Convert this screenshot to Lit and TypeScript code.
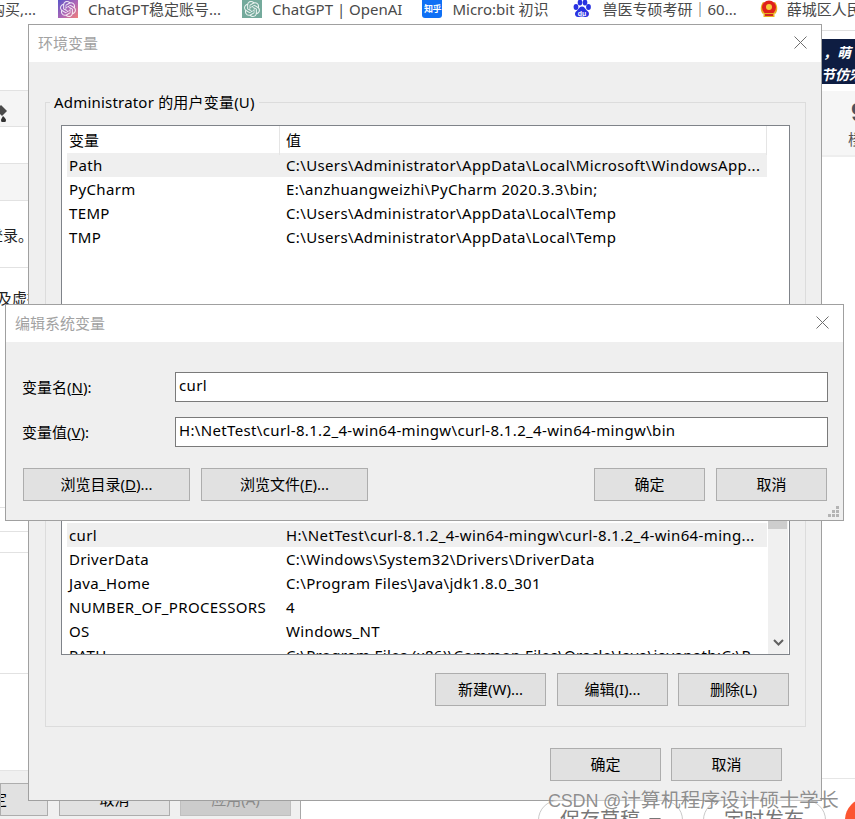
import { LitElement, html, css } from "lit";
import { customElement } from "lit/decorators.js";

const OPENAI =
  "M22.2819 9.8211a5.9847 5.9847 0 0 0-.5157-4.9108 6.0462 6.0462 0 0 0-6.5098-2.9A6.0651 6.0651 0 0 0 4.9807 4.1818a5.9847 5.9847 0 0 0-3.9977 2.9 6.0462 6.0462 0 0 0 .7427 7.0966 5.98 5.98 0 0 0 .511 4.9107 6.051 6.051 0 0 0 6.5146 2.9001A5.9847 5.9847 0 0 0 13.2599 24a6.0557 6.0557 0 0 0 5.7718-4.2058 5.9894 5.9894 0 0 0 3.9977-2.9001 6.0557 6.0557 0 0 0-.7475-7.0729zm-9.022 12.6081a4.4755 4.4755 0 0 1-2.8764-1.0408l.1419-.0804 4.7783-2.7582a.7948.7948 0 0 0 .3927-.6813v-6.7369l2.02 1.1686a.071.071 0 0 1 .038.052v5.5826a4.504 4.504 0 0 1-4.4945 4.4944zm-9.6607-4.1254a4.4708 4.4708 0 0 1-.5346-3.0137l.142.0852 4.783 2.7582a.7712.7712 0 0 0 .7806 0l5.8428-3.3685v2.3324a.0804.0804 0 0 1-.0332.0615L9.74 19.9502a4.4992 4.4992 0 0 1-6.1408-1.6464zM2.3408 7.8956a4.485 4.485 0 0 1 2.3655-1.9728V11.6a.7664.7664 0 0 0 .3879.6765l5.8144 3.3543-2.0201 1.1685a.0757.0757 0 0 1-.071 0l-4.8303-2.7865A4.504 4.504 0 0 1 2.3408 7.872zm16.5963 3.8558L13.1038 8.364 15.1192 7.2a.0757.0757 0 0 1 .071 0l4.8303 2.7913a4.4944 4.4944 0 0 1-.6765 8.1042v-5.6772a.79.79 0 0 0-.407-.667zm2.0107-3.0231l-.142-.0852-4.7735-2.7818a.7759.7759 0 0 0-.7854 0L9.409 9.2297V6.8974a.0662.0662 0 0 1 .0284-.0615l4.8303-2.7866a4.4992 4.4992 0 0 1 6.6802 4.66zM8.3065 12.863l-2.02-1.1638a.0804.0804 0 0 1-.038-.0567V6.0742a4.4992 4.4992 0 0 1 7.3757-3.4537l-.142.0805L8.704 5.459a.7948.7948 0 0 0-.3927.6813zm1.0976-2.3654l2.602-1.4998 2.6069 1.4998v2.9994l-2.5974 1.4997-2.6067-1.4997Z";

const upperRows = [
  ["Path", "C:\\Users\\Administrator\\AppData\\Local\\Microsoft\\WindowsApp..."],
  ["PyCharm", "E:\\anzhuangweizhi\\PyCharm 2020.3.3\\bin;"],
  ["TEMP", "C:\\Users\\Administrator\\AppData\\Local\\Temp"],
  ["TMP", "C:\\Users\\Administrator\\AppData\\Local\\Temp"],
];
const lowerRows = [
  ["ComSpec", "C:\\Windows\\system32\\cmd.exe"],
  ["curl", "H:\\NetTest\\curl-8.1.2_4-win64-mingw\\curl-8.1.2_4-win64-ming..."],
  ["DriverData", "C:\\Windows\\System32\\Drivers\\DriverData"],
  ["Java_Home", "C:\\Program Files\\Java\\jdk1.8.0_301"],
  ["NUMBER_OF_PROCESSORS", "4"],
  ["OS", "Windows_NT"],
  ["PATH", "C:\\Program Files (x86)\\Common Files\\Oracle\\Java\\javapath;C:\\P..."],
];

@customElement("app-root")
export class AppRoot extends LitElement {
  static styles = css`
    :host {
      display: block;
      position: relative;
      width: 855px;
      height: 819px;
      overflow: hidden;
      background: #fff;
      font-family: "Noto Sans", "Noto Sans CJK SC", sans-serif;
      font-size: 15px;
      color: #000;
    }
    * { box-sizing: border-box; }

    /* bookmarks */
    .bar {
      display: flex;
      align-items: flex-start;
      height: 24px;
      overflow: hidden;
      color: #4a4a4a;
      font-size: 15px;
      line-height: 18px;
      white-space: nowrap;
    }
    .bm { display: flex; align-items: flex-start; flex: none; }
    .bm .t { margin-left: 10px; }
    .ico { display: block; width: 20px; height: 18px; flex: none; }
    .gpt1 { background: linear-gradient(135deg, #5a55c8, #b067b5 55%, #f2817a); }
    .gpt2 { background: #74aa9c; }
    .ico.gpt1, .ico.gpt2 { padding: 1px 2px; }
    .zh {
      background: #0f70f5;
      border-radius: 0 0 3px 3px;
      color: #fff;
      font-size: 9px;
      line-height: 17px;
      text-align: center;
      font-weight: 700;
      letter-spacing: -0.5px;
    }

    /* page behind the windows */
    .back-left {
      position: absolute;
      left: 0;
      top: 30px;
      width: 28px;
      height: 740px;
      display: flex;
      flex-direction: column;
      overflow: hidden;
      font-size: 15px;
      color: #222;
      white-space: nowrap;
    }
    .s { flex: none; border-bottom: 1px solid #e2e2e2; position: relative; }
    .gray { background: #f5f5f5; }
    .back-left svg { position: absolute; left: -4px; top: 13px; }
    .align-end { display: flex; justify-content: flex-end; align-items: center; padding-right: 1px; }
    .tail { margin-right: -6px; }
    .back-right {
      position: absolute;
      left: 822px;
      top: 30px;
      width: 33px;
      height: 749px;
      display: flex;
      flex-direction: column;
      overflow: hidden;
      white-space: nowrap;
    }
    .rline { height: 9px; flex: none; border-top: 1px solid #e0e0e0; }
    .banner {
      height: 45px;
      flex: none;
      background: #0e1d42;
      color: #fff;
      font-style: italic;
      font-weight: 700;
      font-size: 14px;
      line-height: 22px;
      padding: 3px 0 0 1px;
      overflow: hidden;
    }
    .banner div + div { margin-left: -2px; }
    .rcard {
      margin-top: 7px;
      height: 66px;
      flex: none;
      background: #f6f6f6;
      border-bottom: 2px solid #eee;
      overflow: hidden;
      padding-left: 26px;
      color: #555;
    }
    .rnum { font: 700 26px/24px "Liberation Sans", sans-serif; color: #4c5160; margin: 9px 0 0 3px; }
    .rlbl { margin-top: 5px; font-size: 15px; line-height: 20px; }
    .rspacer { flex: 1; border-bottom: 1px solid #e6e6e6; }

    .footer-left {
      position: absolute;
      left: 0;
      top: 770px;
      width: 301px;
      height: 49px;
      background: #f0f0f0;
      border-top: 1px solid #e4e4e4;
      border-right: 1px solid #a8a8a8;
      display: flex;
      align-items: flex-start;
      gap: 10px;
      padding: 12px 0 0 0;
    }
    .fbtn {
      flex: none;
      width: 111px;
      height: 33px;
      background: #e1e1e1;
      border: 1px solid #adadad;
      font-size: 15px;
      line-height: 30px;
      text-align: center;
    }
    .fbtn.first { width: 48px; text-align: right; padding-right: 40px; margin-right: 1px; overflow: hidden; white-space: nowrap; direction: rtl; }
    .fbtn.dis { background: #cccccc; border-color: #bfbfbf; color: #8a8a8a; }

    /* windows */
    .win {
      position: absolute;
      display: flex;
      flex-direction: column;
      border: 1px solid #a0a0a0;
      background: #efefef;
    }
    .w-env { left: 28px; top: 24px; width: 794px; height: 777px; }
    .w-edit { left: 5px; top: 304px; width: 839px; height: 217px; }
    .title {
      flex: none;
      height: 37px;
      background: #fff;
      display: flex;
      align-items: center;
      justify-content: space-between;
      color: #a2a2a2;
      padding: 0 14px 2px 9px;
    }
    .x { display: block; width: 13px; height: 13px; }

    .env-body { flex: 1; display: flex; flex-direction: column; padding: 30px 15px 19px 16px; min-height: 0; }
    fieldset {
      flex: 1;
      margin: 0;
      min-width: 0;
      min-height: 0;
      border: 1px solid #dcdcdc;
      padding: 13px 15px 20px 15px;
      display: flex;
      flex-direction: column;
    }
    legend {
      margin-left: -11px;
      padding: 0 4px;
      line-height: 20px;
      font-size: 15px;
      letter-spacing: 0.2px;
    }
    .list {
      flex: 1;
      min-height: 0;
      background: #fff;
      border: 1px solid #7f8389;
      display: flex;
      flex-direction: column;
      justify-content: space-between;
      overflow: hidden;
      white-space: nowrap;
    }
    .head {
      display: grid;
      grid-template-columns: 213px 487px;
      margin-left: 5px;
      height: 27px;
      line-height: 29px;
      flex: none;
    }
    .head div { padding-left: 2px; border-right: 1px solid #e5e5e5; }
    .head div + div { padding-left: 6px; }
    .row {
      display: grid;
      grid-template-columns: 212px 488px;
      height: 24px;
      line-height: 24px;
      flex: none;
      letter-spacing: 0.36px;
    }
    .row div { padding-left: 2px; overflow: hidden; }
    .row div + div { padding-left: 7px; }
    .row.sel { background: #efefef; }
    .rows { margin-left: 5px; width: 700px; }
    .lower {
      flex: none;
      height: 155px;
      display: flex;
      overflow: hidden;
    }
    .lower .rows { flex: none; }
    .sb {
      flex: none;
      width: 20px;
      margin-left: 1px;
      background: #f0f0f0;
      position: relative;
      display: flex;
      flex-direction: column;
      align-items: center;
      justify-content: flex-end;
      padding-bottom: 8px;
    }
    .thumb { position: absolute; left: 0; right: 1px; top: 0; height: 30px; background: #cdcdcd; }
    .actions { flex: none; display: flex; justify-content: flex-end; gap: 10px; margin-top: 18px; padding-right: 1px; }
    .mr { margin-right: 1px; }
    .btn {
      flex: none;
      width: 111px;
      height: 33px;
      background: #e1e1e1;
      border: 1px solid #adadad;
      font-family: inherit;
      font-size: 15px;
      line-height: 24px;
      text-align: center;
      padding: 0 0 1px;
      color: #000;
    }
    .btn.wide { width: 167px; }
    .env-foot { flex: none; display: flex; justify-content: flex-end; gap: 10px; margin-top: 21px; padding-right: 24px; }

    .edit-body { flex: 1; position: relative; padding: 30px 15px 0 16px; display: flex; flex-direction: column; }
    .form { display: grid; grid-template-columns: 153px 1fr; row-gap: 15px; align-items: center; }
    .inp {
      height: 30px;
      background: #fff;
      border: 1px solid #7a7a7a;
      padding-left: 3px;
      line-height: 25px;
      white-space: nowrap;
      letter-spacing: 0.35px;
    }
    .lbl { line-height: 24px; }
    .edit-acts { display: flex; margin: 21px 1px 0 1px; gap: 11px; }
    .grow { flex: 1; }
    .grip { position: absolute; right: 3px; bottom: 2px; display: block; }

    /* foreground bits of the page */
    .pills {
      position: absolute;
      left: 538px;
      top: 800px;
      display: flex;
      gap: 20px;
      color: #777;
      font-size: 20px;
      line-height: 24px;
      z-index: 1;
    }
    .pill {
      height: 40px;
      border: 1px solid #c9c9c9;
      border-radius: 20px;
      flex: none;
      padding-top: 7px;
      white-space: nowrap;
      display: flex;
      gap: 9px;
    }
    .p1 { width: 145px; padding-left: 21px; }
    .p2 { width: 123px; padding-left: 20px; }
    .tri { width: 0; height: 0; border: 6px solid transparent; border-top: 7px solid #777; margin-top: 10px; }
    .dot { position: absolute; left: 845px; top: 798px; width: 44px; height: 44px; border-radius: 50%; background: #fc5531; }
    .wm {
      position: absolute;
      left: 548px;
      top: 786px;
      font-size: 19.8px;
      line-height: 28px;
      color: rgba(118, 118, 118, 0.82);
      text-shadow: 0 0 1px rgba(255,255,255,.6);
      white-space: nowrap;
      z-index: 2;
    }
    .wm .c { font-family: "Liberation Sans", sans-serif; font-size: 18px; letter-spacing: -0.2px; }
    u { text-underline-offset: 1px; }
  `;

  private knot(bg: string) {
    return html`<span class="ico ${bg}"><svg width="16" height="16" viewBox="0 0 24 24"><path fill="#fff" fill-opacity=".85" d=${OPENAI}></path></svg></span>`;
  }

  private xIcon() {
    return html`<svg class="x" viewBox="0 0 13 13"><path d="M.5.5l12 12M12.5.5l-12 12" stroke="#6e6e6e" stroke-width="1" fill="none"></path></svg>`;
  }

  private rows(rows: string[][], selected: number) {
    return rows.map(
      (r, i) => html`<div class="row ${i === selected ? "sel" : ""}"><div>${r[0]}</div><div>${r[1]}</div></div>`
    );
  }

  render() {
    return html`
      <div class="bar">
        <div class="bm" style="margin-left:-10px"><span>购买,...</span></div>
        <div class="bm" style="margin-left:22px">${this.knot("gpt1")}<span class="t">ChatGPT稳定账号...</span></div>
        <div class="bm" style="margin-left:21px">${this.knot("gpt2")}<span class="t">ChatGPT | OpenAI</span></div>
        <div class="bm" style="margin-left:20px"><span class="ico zh">知乎</span><span class="t">Micro:bit 初识</span></div>
        <div class="bm" style="margin-left:24px">
          <svg class="ico" viewBox="0 0 20 18">
            <ellipse cx="4" cy="7" rx="2.4" ry="3" fill="#2932e1"></ellipse>
            <ellipse cx="8" cy="2.5" rx="2.3" ry="3" fill="#2932e1"></ellipse>
            <ellipse cx="13" cy="2.5" rx="2.3" ry="3" fill="#2932e1"></ellipse>
            <ellipse cx="16.5" cy="7" rx="2.4" ry="3" fill="#2932e1"></ellipse>
            <path d="M10 6.5c3 0 3.5 3.5 6 5 2 2 .8 5.5-2 5.5-1.500 0-2.500-.6-4-.6s-2.500.6-4 .6c-2.800 0-4-3.500-2-5.500 2.500-1.500 3-5 6-5z" fill="#2932e1"></path>
            <text x="10" y="15.500" font-size="7" font-weight="700" fill="#fff" text-anchor="middle" font-family="Liberation Sans">du</text>
          </svg>
          <span class="t">兽医专硕考研｜60...</span>
        </div>
        <div class="bm" style="margin-left:22px">
          <svg class="ico" viewBox="0 0 20 18">
            <path d="M4 14c-3-3-3-8 0-12l2 1c-2 3-2 6 0 9zM16 14c3-3 3-8 0-12l-2 1c2 3 2 6 0 9z" fill="#e8b020"></path>
            <circle cx="10" cy="7.500" r="7" fill="#e0201b"></circle>
            <circle cx="10" cy="7" r="3" fill="#f4cb3a"></circle>
            <rect x="4.500" y="13" width="11" height="4" fill="#e8b020"></rect>
            <rect x="6" y="14" width="8" height="2" fill="#d0281f"></rect>
          </svg>
          <span class="t" style="margin-left:8px">薛城区人民政府</span>
        </div>
      </div>

      <div class="back-left">
        <div class="s" style="height:61px"></div>
        <div class="s gray" style="height:36px">
          <svg width="14" height="18" viewBox="0 0 14 18"><path d="M5 1l6 6-5 5-6-6z" fill="#4a4a4a"></path><path d="M7 12c2 2 3 3 3 4a2.500 2.500 0 0 1-5 0c0-1 1-2 2-4z" fill="#333"></path></svg>
        </div>
        <div class="s" style="height:37px"></div>
        <div class="s gray" style="height:37px"></div>
        <div class="s align-end" style="height:67px"><span class="tail">登录。</span></div>
        <div class="s" style="height:240px; padding-top:19px"><span style="margin-left:-3px">及虚拟</span></div>
        <div class="s" style="height:24px"></div>
        <div class="s" style="height:21px"></div>
        <div class="s" style="height:121px"></div>
      </div>

      <div class="back-right">
        <div class="rline"></div>
        <div class="banner"><div>，萌</div><div>节仿宋</div></div>
        <div class="rcard"><div class="rnum">9</div><div class="rlbl">楼</div></div>
        <div class="rspacer"></div>
      </div>

      <div class="footer-left">
        <div class="fbtn first">定</div>
        <div class="fbtn">取消</div>
        <div class="fbtn dis">应用(A)</div>
      </div>

      <div class="pills">
        <div class="pill p1"><span>保存草稿</span><span class="tri"></span></div>
        <div class="pill p2"><span>定时发布</span></div>
      </div>
      <div class="dot"></div>

      <div class="win w-env">
        <div class="title"><span>环境变量</span>${this.xIcon()}</div>
        <div class="env-body">
          <fieldset>
            <legend>Administrator 的用户变量(U)</legend>
            <div class="list">
              <div>
                <div class="head"><div>变量</div><div>值</div></div>
                <div class="rows">${this.rows(upperRows, 0)}</div>
              </div>
              <div class="lower">
                <div class="rows">${this.rows(lowerRows, 1)}</div>
                <div class="sb">
                  <div class="thumb"></div>
                  <svg width="11" height="7" viewBox="0 0 11 7"><path d="M1 1l4.500 4.500L10 1" stroke="#606060" stroke-width="2" fill="none"></path></svg>
                </div>
              </div>
            </div>
            <div class="actions">
              <button class="btn mr">新建(W)...</button>
              <button class="btn">编辑(I)...</button>
              <button class="btn">删除(L)</button>
            </div>
          </fieldset>
          <div class="env-foot">
            <button class="btn">确定</button>
            <button class="btn">取消</button>
          </div>
        </div>
      </div>

      <div class="win w-edit">
        <div class="title"><span>编辑系统变量</span>${this.xIcon()}</div>
        <div class="edit-body">
          <div class="form">
            <div class="lbl">变量名(<u>N</u>):</div>
            <div class="inp">curl</div>
            <div class="lbl">变量值(<u>V</u>):</div>
            <div class="inp">H:\\NetTest\\curl-8.1.2_4-win64-mingw\\curl-8.1.2_4-win64-mingw\\bin</div>
          </div>
          <div class="edit-acts">
            <button class="btn wide">浏览目录(<u>D</u>)...</button>
            <button class="btn wide">浏览文件(<u>F</u>)...</button>
            <span class="grow"></span>
            <button class="btn">确定</button>
            <button class="btn">取消</button>
          </div>
          <svg class="grip" width="12" height="12" viewBox="0 0 12 12" fill="#b4b4b4">
            <rect x="8" y="0" width="3" height="3"></rect>
            <rect x="4" y="4" width="3" height="3"></rect><rect x="8" y="4" width="3" height="3"></rect>
            <rect x="0" y="8" width="3" height="3"></rect><rect x="4" y="8" width="3" height="3"></rect><rect x="8" y="8" width="3" height="3"></rect>
          </svg>
        </div>
      </div>

      <div class="wm"><span class="c">CSDN @</span>计算机程序设计硕士学长</div>
    `;
  }
}
